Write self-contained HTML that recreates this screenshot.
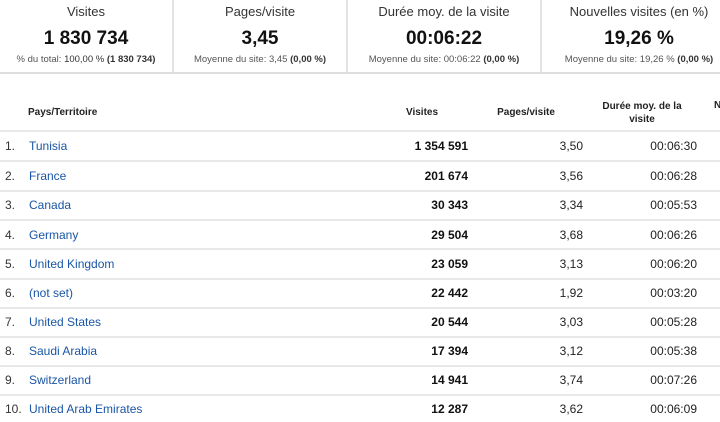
<!DOCTYPE html>
<html><head><meta charset="utf-8"><style>
body{margin:0;width:720px;height:419px;overflow:hidden;background:#fff;font-family:"Liberation Sans",Arial,sans-serif;color:#222;position:relative}
.box{position:absolute;top:0;height:72px;text-align:center;border-right:2px solid #e3e3e3}
.t{position:absolute;top:4px;width:100%;font-size:13px;color:#333}
.b{position:absolute;top:28px;width:100%;font-size:19px;font-weight:bold;color:#111}
.s{position:absolute;top:54px;width:100%;font-size:9.5px;color:#555}
.s b{color:#333}
.top{position:absolute;left:0;top:72px;width:720px;height:2px;background:#ddd}
.hdr{position:absolute;font-size:10px;font-weight:bold;color:#222;text-align:center}
.line{position:absolute;left:0;width:720px;height:2px;background:#e8e8e8}
.r{position:absolute;left:0;width:720px;height:20px;font-size:12px}
.r span{position:absolute;top:0}
.n{left:5px;color:#333}
.c{left:29px;color:#1a56a6}
.v{right:252px;font-weight:bold;color:#111}
.p{right:137px}
.d{right:23px}
</style></head><body>
<div class="box" style="left:0;width:172px"><div class="t">Visites</div><div class="b">1 830 734</div><div class="s">% du total: <b style="font-weight:normal">100,00 %</b> <b>(1 830 734)</b></div></div>
<div class="box" style="left:174px;width:172px"><div class="t">Pages/visite</div><div class="b">3,45</div><div class="s">Moyenne du site: 3,45 <b>(0,00 %)</b></div></div>
<div class="box" style="left:348px;width:192px"><div class="t">Durée moy. de la visite</div><div class="b">00:06:22</div><div class="s">Moyenne du site: 00:06:22 <b>(0,00 %)</b></div></div>
<div class="box" style="left:542px;width:194px;border-right:none"><div class="t">Nouvelles visites (en %)</div><div class="b">19,26 %</div><div class="s">Moyenne du site: 19,26 % <b>(0,00 %)</b></div></div>
<div class="top"></div>
<div class="hdr" style="left:28px;top:107px">Pays/Territoire</div>
<div class="hdr" style="left:390px;top:107px;width:64px">Visites</div>
<div class="hdr" style="left:490px;top:107px;width:72px">Pages/visite</div>
<div class="hdr" style="left:592px;top:100px;width:100px;line-height:13px">Durée moy. de la<br>visite</div>
<div class="hdr" style="left:714px;top:100px">N</div>
<div class="line" style="top:130px"></div>
<div class="r" style="top:139px"><span class="n">1.</span><span class="c">Tunisia</span><span class="v">1 354 591</span><span class="p">3,50</span><span class="d">00:06:30</span></div>
<div class="line" style="top:160px"></div>
<div class="r" style="top:169px"><span class="n">2.</span><span class="c">France</span><span class="v">201 674</span><span class="p">3,56</span><span class="d">00:06:28</span></div>
<div class="line" style="top:190px"></div>
<div class="r" style="top:198px"><span class="n">3.</span><span class="c">Canada</span><span class="v">30 343</span><span class="p">3,34</span><span class="d">00:05:53</span></div>
<div class="line" style="top:219px"></div>
<div class="r" style="top:228px"><span class="n">4.</span><span class="c">Germany</span><span class="v">29 504</span><span class="p">3,68</span><span class="d">00:06:26</span></div>
<div class="line" style="top:248px"></div>
<div class="r" style="top:257px"><span class="n">5.</span><span class="c">United Kingdom</span><span class="v">23 059</span><span class="p">3,13</span><span class="d">00:06:20</span></div>
<div class="line" style="top:278px"></div>
<div class="r" style="top:286px"><span class="n">6.</span><span class="c">(not set)</span><span class="v">22 442</span><span class="p">1,92</span><span class="d">00:03:20</span></div>
<div class="line" style="top:307px"></div>
<div class="r" style="top:315px"><span class="n">7.</span><span class="c">United States</span><span class="v">20 544</span><span class="p">3,03</span><span class="d">00:05:28</span></div>
<div class="line" style="top:336px"></div>
<div class="r" style="top:344px"><span class="n">8.</span><span class="c">Saudi Arabia</span><span class="v">17 394</span><span class="p">3,12</span><span class="d">00:05:38</span></div>
<div class="line" style="top:365px"></div>
<div class="r" style="top:373px"><span class="n">9.</span><span class="c">Switzerland</span><span class="v">14 941</span><span class="p">3,74</span><span class="d">00:07:26</span></div>
<div class="line" style="top:394px"></div>
<div class="r" style="top:402px"><span class="n">10.</span><span class="c">United Arab Emirates</span><span class="v">12 287</span><span class="p">3,62</span><span class="d">00:06:09</span></div>
</body></html>
